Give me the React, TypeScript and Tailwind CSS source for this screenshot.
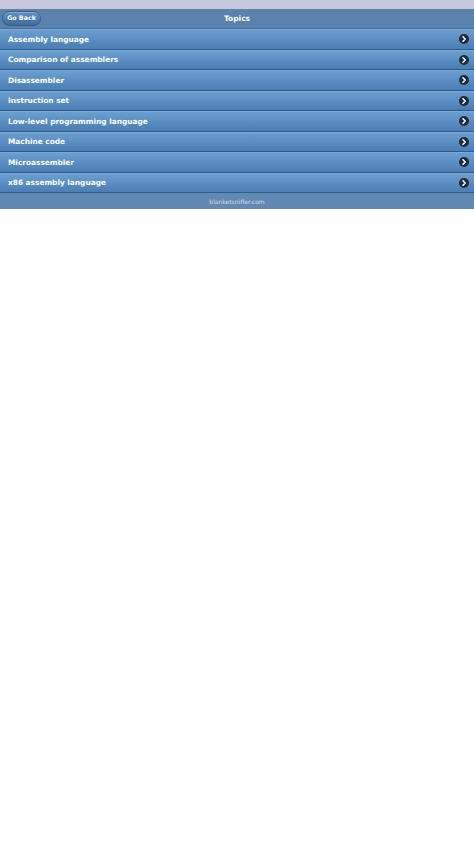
const topics = [
  "Assembly language",
  "Comparison of assemblers",
  "Disassembler",
  "Instruction set",
  "Low-level programming language",
  "Machine code",
  "Microassembler",
  "x86 assembly language",
]

function Chevron() {
  return (
    <svg width="10" height="10" viewBox="0 0 10 10" className="shrink-0">
      <circle cx="5" cy="5" r="5" fill="#1f2b3b" />
      <path d="M4 2.8 L6.2 5 L4 7.2" stroke="#ffffff" strokeWidth="1.6" fill="none" strokeLinecap="round" strokeLinejoin="round" />
    </svg>
  )
}

export default function App() {
  return (
    <div className="w-[474px] min-h-[842px] bg-white font-['DejaVu_Sans',sans-serif]">
      <div className="h-[9px] bg-[#c6c7dd]" />
      <div className="relative h-[20px] bg-[#5b82ad] border-b border-[#4a6f98] flex items-center justify-center">
        <button className="absolute left-[2px] top-[2px] h-[15px] w-[39px] rounded-full bg-gradient-to-b from-[#5f8fc0] to-[#3f6d9f] border border-[#2f5a88] text-white text-[6.3px] font-bold leading-none shadow-[inset_0_1px_0_rgba(255,255,255,0.3)]">
          Go Back
        </button>
        <span className="text-white text-[7.5px] font-bold">Topics</span>
      </div>
      <ul>
        {topics.map((t) => (
          <li
            key={t}
            className="h-[20.5px] flex items-center justify-between pl-[8px] pr-[5px] bg-gradient-to-b from-[#6b9fd0] to-[#4a7eb4] border-t border-[#7aa9d6] border-b border-b-[#2d5b8a]"
          >
            <span className="text-white text-[7.4px] font-bold">{t}</span>
            <Chevron />
          </li>
        ))}
      </ul>
      <div className="h-[16px] bg-[#6189b4] flex items-center justify-center">
        <span className="text-[#d3deea] text-[6px]">blanketsniffer.com</span>
      </div>
    </div>
  )
}
